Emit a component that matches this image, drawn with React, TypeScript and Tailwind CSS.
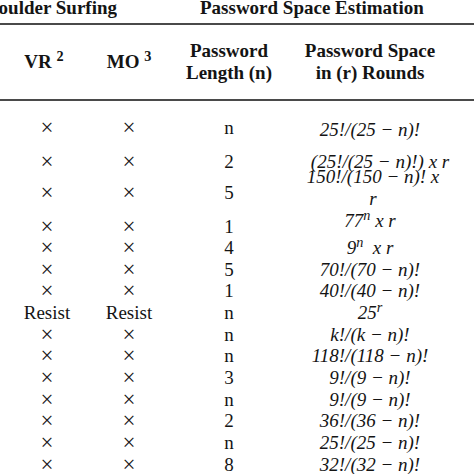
import type { ReactNode } from "react";

type Row = {
  a: string;
  b: string;
  len: string;
  space: ReactNode;
  h: string;
  fc?: string;
};

const rows: Row[] = [
  { a: "×", b: "×", len: "n", space: "25!/(25 − n)!", h: "h-[53.7px]", fc: "pt-[4px]" },
  { a: "×", b: "×", len: "2", space: "(25!/(25 − n)!) x r", h: "h-[14.3px]", fc: "pl-[20px]" },
  {
    a: "×",
    b: "×",
    len: "5",
    space: (
      <>
        150!/(150 − n)! x
        <br />r
      </>
    ),
    h: "h-[47.7px]",
    fc: "pb-[9px] pl-[6px]",
  },
  {
    a: "×",
    b: "×",
    len: "1",
    space: (
      <>
        77<sup>n</sup> x r
      </>
    ),
    h: "h-[20.3px]",
    fc: "pb-[11px]",
  },
  {
    a: "×",
    b: "×",
    len: "4",
    space: (
      <>
        9<sup>n</sup>&nbsp; x r
      </>
    ),
    h: "h-[21.7px]",
  },
  { a: "×", b: "×", len: "5", space: "70!/(70 − n)!", h: "h-[21.7px]" },
  { a: "×", b: "×", len: "1", space: "40!/(40 − n)!", h: "h-[21.7px]" },
  {
    a: "Resist",
    b: "Resist",
    len: "n",
    space: (
      <>
        25<sup>r</sup>
      </>
    ),
    h: "h-[21.7px]",
  },
  { a: "×", b: "×", len: "n", space: "k!/(k − n)!", h: "h-[21.7px]" },
  { a: "×", b: "×", len: "n", space: "118!/(118 − n)!", h: "h-[21.7px]" },
  { a: "×", b: "×", len: "3", space: "9!/(9 − n)!", h: "h-[21.7px]" },
  { a: "×", b: "×", len: "n", space: "9!/(9 − n)!", h: "h-[21.7px]" },
  { a: "×", b: "×", len: "2", space: "36!/(36 − n)!", h: "h-[21.7px]" },
  { a: "×", b: "×", len: "n", space: "25!/(25 − n)!", h: "h-[21.7px]" },
  { a: "×", b: "×", len: "8", space: "32!/(32 − n)!", h: "h-[21.7px]" },
];

function Mark({ v }: { v: string }) {
  if (v === "×") return <span className="text-[23px] leading-[18px] font-light">×</span>;
  return <span>{v}</span>;
}

export default function App() {
  return (
    <div className="w-[474px] h-[474px] overflow-hidden bg-white text-[#141414] font-['Liberation_Serif',serif] text-[19px]">
      {/* group headings */}
      <div className="flex h-[23px] font-bold leading-[16px] whitespace-nowrap">
        <div className="w-[117px] overflow-hidden flex justify-end">Shoulder Surfing</div>
        <div className="pl-[83px]">Password Space Estimation</div>
      </div>
      <div className="h-[2px] bg-[#4a4a4a]" />

      {/* column headings */}
      <div className="flex h-[74px] items-center font-bold leading-[22px] text-center">
        <div className="w-[94px] pr-[6px]">
          VR <sup>2</sup>
        </div>
        <div className="w-[70px]">
          MO <sup>3</sup>
        </div>
        <div className="w-[130px]">
          Password
          <br />
          Length (n)
        </div>
        <div className="w-[152px]">
          Password Space
          <br />
          in (r) Rounds
        </div>
      </div>
      <div className="h-[2px] bg-[#4a4a4a]" />

      {/* body */}
      <div className="leading-[20px]">
        {rows.map((r, i) => (
          <div key={i} className={`flex items-center ${r.h}`}>
            <div className="w-[94px] shrink-0 flex justify-center">
              <Mark v={r.a} />
            </div>
            <div className="w-[70px] shrink-0 flex justify-center">
              <Mark v={r.b} />
            </div>
            <div className="w-[130px] shrink-0 text-center">{r.len}</div>
            <div className={`w-[152px] shrink-0 flex justify-center whitespace-nowrap italic text-center leading-[22px] ${r.fc ?? ""}`}>
              <span>{r.space}</span>
            </div>
          </div>
        ))}
      </div>
    </div>
  );
}
